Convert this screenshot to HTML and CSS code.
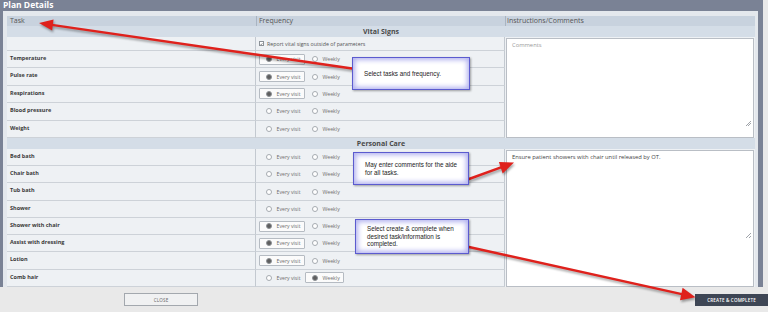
FILE: index.html
```html
<!DOCTYPE html>
<html>
<head>
<meta charset="utf-8">
<title>Plan Details</title>
<link rel="stylesheet" href="styles.css">
</head>
<body>
<div class="dialog">
  <div class="titlebar"><span class="title">Plan Details</span></div>
  <div class="dialog-body">
    <div class="plan-table">
      <div class="hcell">Task</div>
      <div class="hcell">Frequency</div>
      <div class="hcell">Instructions/Comments</div>

      <div class="section">Vital Signs</div>
      <div class="tcell"></div>
      <div class="fcell"><span class="checkbox"><svg viewBox="0 0 6 6" width="4" height="4"><path d="M1 3 L2.5 4.6 L5 1.3" fill="none" stroke="#444" stroke-width="1"/></svg></span><span class="chk-label">Report vital signs outside of parameters</span></div>
      <div class="ccell vital"><div class="textarea placeholder">Comments<span class="grip"></span></div></div>

      <div class="tcell">Temperature</div>
      <div class="fcell"><span class="opt opt1 sel"><span class="radio on"></span>Every visit</span><span class="opt opt2"><span class="radio"></span>Weekly</span></div>
      <div class="tcell">Pulse rate</div>
      <div class="fcell"><span class="opt opt1 sel"><span class="radio on"></span>Every visit</span><span class="opt opt2"><span class="radio"></span>Weekly</span></div>
      <div class="tcell">Respirations</div>
      <div class="fcell"><span class="opt opt1 sel"><span class="radio on"></span>Every visit</span><span class="opt opt2"><span class="radio"></span>Weekly</span></div>
      <div class="tcell">Blood pressure</div>
      <div class="fcell"><span class="opt opt1"><span class="radio"></span>Every visit</span><span class="opt opt2"><span class="radio"></span>Weekly</span></div>
      <div class="tcell">Weight</div>
      <div class="fcell"><span class="opt opt1"><span class="radio"></span>Every visit</span><span class="opt opt2"><span class="radio"></span>Weekly</span></div>

      <div class="section">Personal Care</div>
      <div class="tcell">Bed bath</div>
      <div class="fcell"><span class="opt opt1"><span class="radio"></span>Every visit</span><span class="opt opt2"><span class="radio"></span>Weekly</span></div>
      <div class="ccell personal"><div class="textarea">Ensure patient showers with chair until released by OT.<span class="grip"></span></div></div>
      <div class="tcell">Chair bath</div>
      <div class="fcell"><span class="opt opt1"><span class="radio"></span>Every visit</span><span class="opt opt2"><span class="radio"></span>Weekly</span></div>
      <div class="tcell">Tub bath</div>
      <div class="fcell"><span class="opt opt1"><span class="radio"></span>Every visit</span><span class="opt opt2"><span class="radio"></span>Weekly</span></div>
      <div class="tcell">Shower</div>
      <div class="fcell"><span class="opt opt1"><span class="radio"></span>Every visit</span><span class="opt opt2"><span class="radio"></span>Weekly</span></div>
      <div class="tcell">Shower with chair</div>
      <div class="fcell"><span class="opt opt1 sel"><span class="radio on"></span>Every visit</span><span class="opt opt2"><span class="radio"></span>Weekly</span></div>
      <div class="tcell">Assist with dressing</div>
      <div class="fcell"><span class="opt opt1 sel"><span class="radio on"></span>Every visit</span><span class="opt opt2"><span class="radio"></span>Weekly</span></div>
      <div class="tcell">Lotion</div>
      <div class="fcell"><span class="opt opt1 sel"><span class="radio on"></span>Every visit</span><span class="opt opt2"><span class="radio"></span>Weekly</span></div>
      <div class="tcell">Comb hair</div>
      <div class="fcell"><span class="opt opt1"><span class="radio"></span>Every visit</span><span class="opt opt2 sel"><span class="radio on"></span>Weekly</span></div>
    </div>
  </div>
</div>
<div class="footer">
  <button class="btn btn-close">CLOSE</button>
  <button class="btn btn-create">CREATE &amp; COMPLETE</button>
</div>

<svg class="arrows" width="768" height="312" viewBox="0 0 768 312">
  <g stroke="#df211c" stroke-width="2.4" fill="none" stroke-linecap="round">
    <line x1="352" y1="68.5" x2="50" y2="24.6"/>
    <line x1="469" y1="179" x2="503" y2="166.6"/>
    <line x1="469" y1="247" x2="684" y2="294.6"/>
  </g>
  <g fill="#df211c">
    <polygon points="39,23 53.6,19.6 52.1,30.6"/>
    <polygon points="514,162.6 498.9,162 502.7,173.4"/>
    <polygon points="695.5,297.3 682.6,287.8 680,300.2"/>
  </g>
</svg>

<div class="callout c1">Select tasks and frequency.</div>
<div class="callout c2">May enter comments for the aide<br>for all tasks.</div>
<div class="callout c3">Select create &amp; complete when<br>desired task/information is<br>completed.</div>
</body>
</html>
```
FILE: styles.css
```css
* { box-sizing: border-box; margin: 0; padding: 0; }
html, body { width: 768px; height: 312px; overflow: hidden; }
body {
  position: relative;
  background: #e9e9e9;
  font-family: "Open Sans", "DejaVu Sans", sans-serif;
  color: #333;
}

.dialog { width: 763px; height: 287px; display: flex; flex-direction: column; }
.titlebar {
  height: 11px; background: #7a8295; color: #fff;
  font-weight: 700; font-size: 8.5px; line-height: 10px;
  padding-left: 3px; overflow: hidden;
}
.title { display: block; margin-top: -0.5px; }

.dialog-body {
  flex: 1; min-height: 0;
  border-left: 3px solid #7a8295; border-right: 5px solid #7a8295;
  background: #e4e8ed; padding: 5px 3px 0 4px; overflow: hidden;
}

.plan-table {
  display: grid;
  grid-template-columns: 249px 249px 250px;
  grid-template-rows: 10px 11px 14px repeat(5, 17.4px) 11px repeat(8, 17.25px);
  background: #eef1f4; height: 271px; overflow: hidden;
}

.hcell {
  background: #c8d2de; font-size: 7px; line-height: 10px; color: #555;
  padding-left: 3px; border-left: 1px solid #a9b4c2; white-space: nowrap;
}
.hcell:first-child { border-left: none; }
.hcell:nth-child(2) { padding-left: 2px; }
.hcell:nth-child(3) { padding-left: 1px; }

.section {
  grid-column: 1 / -1; background: #d4dde7;
  font-size: 7px; font-weight: 700; line-height: 11px;
  text-align: center; color: #4a4a4a;
}

.tcell {
  border-bottom: 1px solid #cdd2d8; border-right: 1px solid #c3c9d0;
  font-size: 5.5px; font-weight: 700; line-height: 8px; color: #3a3a3a;
  padding: 3px 0 0 3px; white-space: nowrap;
}
.fcell {
  border-bottom: 1px solid #cdd2d8; border-right: 1px solid #c3c9d0;
  display: flex; align-items: center; padding-left: 3px;
  font-size: 5.2px; color: #6e6e6e; white-space: nowrap;
}

.checkbox {
  width: 5px; height: 5px; border: 1px solid #8c9298; background: #fff;
  display: flex; align-items: center; justify-content: center; margin-right: 3px;
}
.chk-label { color: #555; font-size: 5.3px; }

.opt {
  display: flex; align-items: center; height: 11px; padding-left: 5.5px;
  border: 1px solid transparent; border-radius: 1px;
}
.opt1 { width: 46px; }
.opt2 { width: 39px; }
.opt.sel { background: #fbfbfb; border-color: #b5bbc2; }
.radio {
  width: 6px; height: 6px; border-radius: 50%;
  border: 1px solid #a6abb1; background: #fff; margin-right: 5px; flex: none;
}
.radio.on { background: #5e5e5e; border-color: #8e9296; }

.ccell {
  grid-column: 3; padding: 1px 1px 0 1px; position: relative;
}
.ccell.vital { grid-row: span 6; }
.ccell.personal { grid-row: span 8; }
.textarea {
  position: relative; height: 100%;
  background: #fff; border: 1px solid #b9bec5;
  font-size: 5.8px; line-height: 7px; color: #444; padding: 3px 5px;
  white-space: nowrap;
}
.textarea.placeholder { color: #9a9a9a; font-size: 5.8px; }
.grip {
  position: absolute; top: 82px; right: 2px; width: 5px; height: 5px;
  background: linear-gradient(135deg, transparent 45%, #a0a4aa 45%, #a0a4aa 55%, transparent 55%, transparent 70%, #a0a4aa 70%, #a0a4aa 80%, transparent 80%);
}

.footer { height: 25px; display: flex; align-items: flex-start; padding-top: 6px; }
.btn {
  font-family: "Open Sans", "DejaVu Sans", sans-serif; font-size: 4.6px;
  display: flex; align-items: center; justify-content: center; letter-spacing: 0.15px;
}
.btn-close {
  margin-left: 124px; width: 74px; height: 13px;
  border: 1px solid #a3a8ae; background: #f0f1f2; color: #666;
}
.btn-create {
  margin-left: auto; margin-top: 1px; width: 73px; height: 12px;
  border: none; background: #3e4655; color: #fff; font-weight: 600;
}

.arrows {
  position: absolute; left: 0; top: 0; pointer-events: none;
  filter: drop-shadow(1px 2px 1px rgba(0, 0, 0, 0.35));
}

.callout {
  position: absolute; background: #fff;
  border: 1px solid #5b5bcf;
  box-shadow: inset 0 0 5px 2px #b3b3ef, 1px 1px 2px rgba(0, 0, 0, 0.35);
  font-family: "Liberation Sans", Arial, sans-serif; font-size: 6.3px; line-height: 7.9px;
  color: #222; padding-left: 11px; white-space: nowrap;
  display: flex; flex-direction: column; justify-content: center;
}
.c1 { left: 352px; top: 57px; width: 118px; height: 33px; }
.c2 { left: 353px; top: 152px; width: 116px; height: 33px; }
.c3 { left: 355px; top: 219px; width: 114px; height: 35px; }
```
